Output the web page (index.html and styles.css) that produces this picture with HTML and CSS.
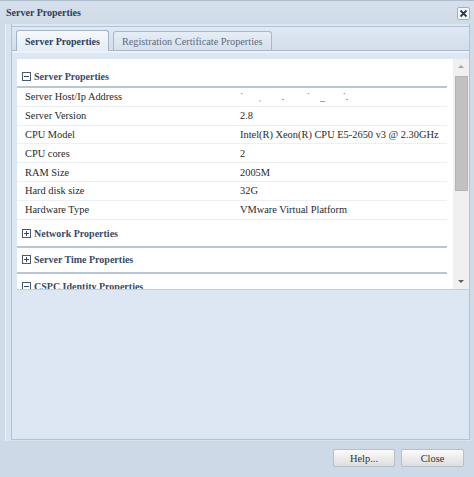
FILE: index.html
```html
<!DOCTYPE html>
<html>
<head>
<meta charset="utf-8">
<link rel="stylesheet" href="styles.css">
</head>
<body>
<div class="window">
  <div class="titlebar">
    <span class="title">Server Properties</span>
    <span class="close"><svg width="13" height="13" viewBox="0 0 13 13"><rect x="0.5" y="0.5" width="12" height="12" rx="1.5" fill="#f4f7fb" stroke="#9fb0c6"/><path d="M3.5 3.5 L9.5 9.5 M9.5 3.5 L3.5 9.5" stroke="#2c3a50" stroke-width="1.8"/></svg></span>
  </div>
  <div class="frame">
    <div class="tabpanel">
      <div class="tabstrip">
        <div class="tab active">Server Properties</div>
        <div class="tab">Registration Certificate Properties</div>
      </div>
      <div class="tabbody">
        <div class="scrollbox">
          <div class="content">
            <div class="section">
              <div class="sec-head open"><span class="box minus"></span>Server Properties</div>
              <div class="rows">
                <div class="row"><span class="k">Server Host/Ip Address</span><span class="v redact">˙&nbsp;&nbsp;&nbsp;&nbsp;&nbsp;&nbsp;ˌ&nbsp;&nbsp;&nbsp;&nbsp;&nbsp;&nbsp;&nbsp;&nbsp;.&nbsp;&nbsp;&nbsp;&nbsp;&nbsp;&nbsp;&nbsp;&nbsp;&nbsp;˙&nbsp;&nbsp;&nbsp;&nbsp;_&nbsp;&nbsp;&nbsp;&nbsp;&nbsp;&nbsp;&nbsp;˙.</span></div>
                <div class="row"><span class="k">Server Version</span><span class="v">2.8</span></div>
                <div class="row"><span class="k">CPU Model</span><span class="v">Intel(R) Xeon(R) CPU E5-2650 v3 @ 2.30GHz</span></div>
                <div class="row"><span class="k">CPU cores</span><span class="v">2</span></div>
                <div class="row"><span class="k">RAM Size</span><span class="v">2005M</span></div>
                <div class="row"><span class="k">Hard disk size</span><span class="v">32G</span></div>
                <div class="row"><span class="k">Hardware Type</span><span class="v">VMware Virtual Platform</span></div>
              </div>
            </div>
            <div class="sec-head closed"><span class="box plus"></span>Network Properties</div>
            <div class="sec-head closed"><span class="box plus"></span>Server Time Properties</div>
            <div class="sec-head closed"><span class="box minus"></span>CSPC Identity Properties</div>
          </div>
          <div class="vscroll">
            <div class="arrow up"></div>
            <div class="track"><div class="thumb"></div></div>
            <div class="arrow down"></div>
          </div>
        </div>
      </div>
    </div>
  </div>
  <div class="footer">
    <button class="btn help">Help...</button>
    <button class="btn">Close</button>
  </div>
</div>
</body>
</html>
```
FILE: styles.css
```css
* { box-sizing: border-box; }
html, body { margin: 0; padding: 0; }
body {
  width: 474px;
  height: 477px;
  background: #cdd9e6;
  font-family: "Liberation Serif", "DejaVu Serif", serif;
  font-size: 10.4px;
  color: #2b2b2b;
  overflow: hidden;
}
.window {
  width: 474px;
  height: 477px;
  display: flex;
  flex-direction: column;
  background: #cfdbe8;
  border-top: 1px solid #aebccd;
}
.titlebar {
  height: 23px;
  display: flex;
  align-items: center;
  justify-content: space-between;
  padding: 0 4px 0 6px;
  background: linear-gradient(#d6e0ec, #d0dbe8);
}
.title {
  font-weight: bold;
  color: #2f3e58;
  font-size: 10px;
}
.close { display: flex; margin-top: 1px; }
.frame {
  flex: none;
  height: 417px;
  margin: 0 4px 0 5px;
  border: 1px solid #e9eff7;
  border-top: none;
  border-bottom: none;
  background: #d9e3ef;
  padding: 0 0 0 5px;
}
.tabpanel {
  height: 416px;
  border: 1px solid #b3c2d5;
  border-top: none;
  background: #dde7f4;
  display: flex;
  flex-direction: column;
  margin-right: -1px;
}
.tabstrip {
  height: 25px;
  display: flex;
  align-items: flex-end;
  padding: 0 0 0 4px;
  gap: 4px;
  border-top: 1px solid #b3c2d5;
  border-bottom: 1px solid #a8b8cc;
  background: linear-gradient(#dfe8f4, #d3deeb);
  margin-top: 2px;
}
.tab {
  height: 19px;
  padding: 0 8px;
  display: flex;
  align-items: center;
  border: 1px solid #a9b8cc;
  border-bottom: none;
  border-radius: 3px 3px 0 0;
  background: linear-gradient(#e6edf6, #d5e0ec);
  color: #5d6b80;
  font-size: 10.3px;
  white-space: nowrap;
}
.tab.active {
  height: 21px;
  margin-bottom: -1px;
  padding: 0 8px;
  background: linear-gradient(#f6f9fc, #e4ecf5);
  color: #2f3e58;
  font-weight: bold;
  font-size: 10px;
  border-color: #a2b2c7;
}
.tabbody {
  flex: 1;
  padding: 6px 0 0 5px;
  border-top: 2px solid #edf2f8;
  background: #dde7f4;
}
.scrollbox {
  height: 231px;
  display: flex;
  background: #fff;
  border-bottom: 1px solid #c2cedb;
}
.content {
  flex: 1;
  min-width: 0;
  overflow: hidden;
  padding: 7px 6px 0 0;
}
.sec-head {
  height: 26px;
  display: flex;
  align-items: center;
  padding-left: 5px;
  color: #3a4a66;
  font-weight: bold;
  font-size: 10px;
  border-bottom: 2px solid #b9c6d3;
}
.sec-head.open {
  height: 22px;
  padding-top: 1px;
  border-bottom: 2px solid #b9c6d3;
}
.box {
  width: 9px;
  height: 9px;
  border: 1px solid #4a5870;
  margin-right: 3px;
  position: relative;
  flex: none;
  background: #fff;
}
.box::before {
  content: "";
  position: absolute;
  left: 1px; top: 3px;
  width: 5px; height: 1px;
  background: #3a4a66;
}
.box.plus::after {
  content: "";
  position: absolute;
  left: 3px; top: 1px;
  width: 1px; height: 5px;
  background: #3a4a66;
}
.rows { margin-bottom: 2px; }
.row {
  height: 18.8px;
  display: flex;
  align-items: center;
  border-bottom: 1px solid #eceff3;
  padding-left: 8px;
  font-weight: normal;
  color: #2a2a2a;
  white-space: nowrap;
}
.k { width: 215px; flex: none; }
.v { color: #2a2a2a; }
.redact { color: #555; letter-spacing: 0; font-size: 10px; }
.sec-head.closed:last-child { border-bottom: none; }
.vscroll {
  width: 16px;
  flex: none;
  display: flex;
  flex-direction: column;
  background: #f0f0f0;
}
.arrow {
  height: 16px;
  position: relative;
}
.arrow::after {
  content: "";
  position: absolute;
  left: 5px;
  border-left: 3px solid transparent;
  border-right: 3px solid transparent;
}
.arrow.up::after { top: 6px; border-bottom: 3px solid #a6a6a6; }
.arrow.down::after { top: 7px; border-top: 3px solid #606060; }
.track { flex: 1; padding: 1px 1px 0 2px; }
.thumb {
  height: 115px;
  background: #c1c1c1;
  border: 1px solid #b4b4b4;
}
.footer {
  flex: 1;
  display: flex;
  justify-content: flex-end;
  align-items: flex-start;
  gap: 6px;
  padding: 8px 10px 0 0;
  background: #cdd9e6;
}
.btn {
  width: 63px;
  height: 18px;
  font-family: "Liberation Serif", "DejaVu Serif", serif;
  font-size: 10.4px;
  color: #333;
  border: 1px solid #b5bfca;
  border-radius: 2px;
  background: linear-gradient(#fbfbfb, #ececec 50%, #dedede);
  padding: 0;
}
.btn.help { width: 62px; }
```
